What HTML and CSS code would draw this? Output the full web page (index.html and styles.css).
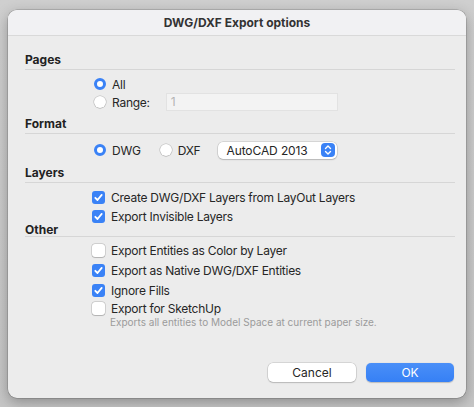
FILE: index.html
```html
<!DOCTYPE html>
<html>
<head>
<meta charset="utf-8">
<link rel="stylesheet" href="styles.css">
</head>
<body>
<div class="dialog">
  <div class="titlebar">DWG/DXF Export options</div>
  <div class="content">
    <div class="heading h-pages">Pages</div>
    <div class="options opt-pages">
      <div class="row r18"><span class="radio on"></span><span class="lbl">All</span></div>
      <div class="row r18"><span class="radio"></span><span class="lbl">Range:</span><span class="field">1</span></div>
    </div>

    <div class="heading h-format">Format</div>
    <div class="options opt-format">
      <div class="row r20">
        <span class="radio on"></span><span class="lbl">DWG</span>
        <span class="radio second"></span><span class="lbl">DXF</span>
        <span class="popup"><span class="popup-text">AutoCAD 2013</span><span class="stepper"><svg width="14" height="14" viewBox="0 0 14 14"><path d="M4.5 5.5 L7 3 L9.5 5.5 M4.5 8.5 L7 11 L9.5 8.5" fill="none" stroke="#fff" stroke-width="1.4" stroke-linecap="round" stroke-linejoin="round"/></svg></span></span>
      </div>
    </div>

    <div class="heading h-layers">Layers</div>
    <div class="options opt-check opt-layers">
      <div class="row r20"><span class="check on"><svg width="13" height="13" viewBox="0 0 13 13"><path d="M3.3 6.8 L5.5 9 L9.7 3.9" fill="none" stroke="#fff" stroke-width="1.8" stroke-linecap="round" stroke-linejoin="round"/></svg></span><span class="lbl">Create DWG/DXF Layers from LayOut Layers</span></div>
      <div class="row r18"><span class="check on"><svg width="13" height="13" viewBox="0 0 13 13"><path d="M3.3 6.8 L5.5 9 L9.7 3.9" fill="none" stroke="#fff" stroke-width="1.8" stroke-linecap="round" stroke-linejoin="round"/></svg></span><span class="lbl">Export Invisible Layers</span></div>
    </div>

    <div class="heading h-other">Other</div>
    <div class="options opt-check opt-other">
      <div class="row r20"><span class="check"></span><span class="lbl">Export Entities as Color by Layer</span></div>
      <div class="row r20"><span class="check on"><svg width="13" height="13" viewBox="0 0 13 13"><path d="M3.3 6.8 L5.5 9 L9.7 3.9" fill="none" stroke="#fff" stroke-width="1.8" stroke-linecap="round" stroke-linejoin="round"/></svg></span><span class="lbl">Export as Native DWG/DXF Entities</span></div>
      <div class="row r20"><span class="check on"><svg width="13" height="13" viewBox="0 0 13 13"><path d="M3.3 6.8 L5.5 9 L9.7 3.9" fill="none" stroke="#fff" stroke-width="1.8" stroke-linecap="round" stroke-linejoin="round"/></svg></span><span class="lbl">Ignore Fills</span></div>
      <div class="row r16"><span class="check"></span><span class="lbl">Export for SketchUp</span></div>
      <div class="note">Exports all entities to Model Space at current paper size.</div>
    </div>
  </div>
  <div class="footer">
    <button class="btn">Cancel</button>
    <button class="btn primary">OK</button>
  </div>
</div>
</body>
</html>
```

FILE: styles.css
```css
html, body {
  margin: 0;
  padding: 0;
}
body {
  width: 474px;
  height: 407px;
  overflow: hidden;
  background: linear-gradient(to bottom, #cfcfcf 0, #c6c6c6 100%);
  font-family: Inter, "Noto Sans", "Liberation Sans", sans-serif;
  font-size: 12px;
  color: #262626;
  padding-top: 10px;
  box-sizing: border-box;
}
.dialog {
  margin-left: 8px;
  width: 458px;
  height: 388px;
  background: #ececec;
  border-radius: 9px;
  box-shadow: 0 0 0 0.5px rgba(0,0,0,0.25), 0 4px 14px rgba(0,0,0,0.3);
  display: flex;
  flex-direction: column;
  overflow: hidden;
}
.titlebar {
  height: 25px;
  line-height: 25px;
  background: #f1f1f3;
  border-bottom: 1px solid #d9d9d9;
  text-align: center;
  font-weight: 700;
  font-size: 12px;
  color: #333;
  flex: none;
}
.content {
  padding: 17px 11px 0 17px;
  display: flex;
  flex-direction: column;
}
.heading {
  font-weight: 700;
  line-height: 14px;
  padding-bottom: 2px;
  border-bottom: 1px solid #d6d6d6;
  color: #222;
}
.h-format { margin-top: 6px; }
.h-layers { margin-top: 6px; }
.h-other { margin-top: -1px; line-height: 12px; padding-bottom: 0; }
.options {
  display: flex;
  flex-direction: column;
  padding-left: 69px;
}
.opt-pages { margin-top: 5px; }
.opt-format { margin-top: 6px; }
.opt-check { padding-left: 67px; }
.opt-layers { margin-top: 4px; }
.opt-other { margin-top: 3px; }
.row {
  display: flex;
  align-items: center;
}
.r16 { height: 16px; }
.r18 { height: 18px; }
.r20 { height: 20px; }
.radio {
  width: 12px;
  height: 12px;
  border-radius: 50%;
  background: #fff;
  box-shadow: 0 0 0 0.5px rgba(0,0,0,0.22), 0 0.5px 1px rgba(0,0,0,0.15);
  flex: none;
  box-sizing: border-box;
}
.radio.on {
  box-shadow: none;
  border: 3.5px solid #3a82f6;
  background: #fff;
}
.radio.second { margin-left: 19px; }
.lbl {
  margin-left: 6px;
  white-space: nowrap;
  letter-spacing: -0.25px;
}
.field {
  margin-left: 16px;
  width: 172px;
  height: 18px;
  box-sizing: border-box;
  background: #f3f3f3;
  border: 1px solid #e2e2e2;
  color: #b4b4b4;
  padding-left: 4px;
  line-height: 16px;
}
.popup {
  margin-left: 18px;
  width: 119px;
  height: 17px;
  background: #fff;
  border-radius: 5px;
  box-shadow: 0 0 0 0.5px rgba(0,0,0,0.18), 0 1px 1.5px rgba(0,0,0,0.15);
  display: flex;
  align-items: center;
  justify-content: space-between;
}
.popup-text {
  padding-left: 8px;
  white-space: nowrap;
  letter-spacing: -0.1px;
}
.stepper {
  width: 14px;
  height: 14px;
  margin-right: 2px;
  border-radius: 4px;
  background: #3a82f6;
  display: flex;
}
.check {
  width: 13px;
  height: 13px;
  border-radius: 3px;
  background: #fff;
  box-shadow: 0 0 0 0.5px rgba(0,0,0,0.22), 0 0.5px 1px rgba(0,0,0,0.15);
  flex: none;
  display: flex;
}
.check.on {
  background: #3a82f6;
  box-shadow: none;
}
.note {
  padding-left: 18px;
  font-size: 10px;
  line-height: 12px;
  color: #9b9b9b;
  white-space: nowrap;
}
.footer {
  margin-top: auto;
  display: flex;
  justify-content: flex-end;
  gap: 10px;
  padding: 0 12px 16px 0;
}
.btn {
  width: 88px;
  height: 19px;
  border: none;
  border-radius: 5px;
  background: #fff;
  font-family: Inter, "Noto Sans", "Liberation Sans", sans-serif;
  font-size: 12px;
  color: #262626;
  box-shadow: 0 0 0 0.5px rgba(0,0,0,0.18), 0 1px 1.5px rgba(0,0,0,0.15);
  padding: 0;
  line-height: 19px;
}
.btn.primary {
  background: linear-gradient(to bottom, #4a8ff8, #3680f5);
  color: #fff;
  box-shadow: 0 0.5px 1px rgba(0,0,0,0.2);
}
```
